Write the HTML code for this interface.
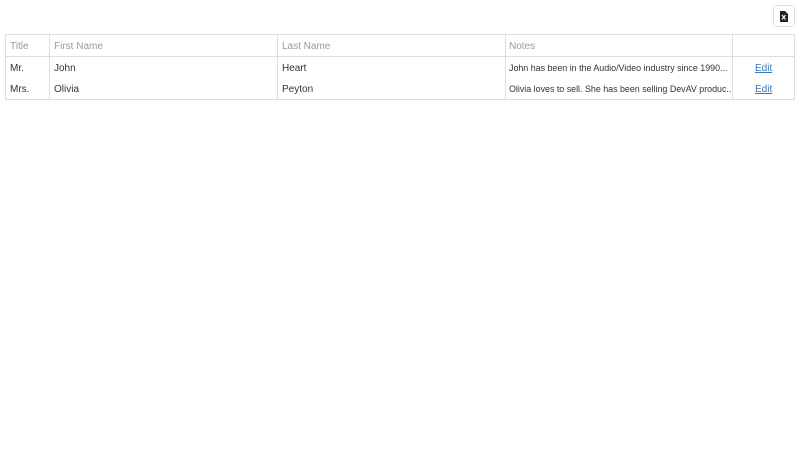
<!DOCTYPE html>
<html><head><style>
body{margin:0;width:800px;height:450px;background:#fff;font-family:"Liberation Sans",sans-serif;font-size:10px;color:#333;position:relative;overflow:hidden}
.btn{position:absolute;left:773px;top:5px;width:22px;height:22px;border:1px solid #ddd;border-radius:3px;box-sizing:border-box;background:#fff}
.grid{position:absolute;left:5px;top:34px;width:790px;height:66px;border:1px solid #ddd;box-sizing:border-box}
.v{position:absolute;top:0;bottom:0;width:1px;background:#ddd}
.hl{position:absolute;left:0;right:0;top:21px;height:1px;background:#ddd}
.t{position:absolute;white-space:nowrap}
.h{color:#999;top:5px}
.n{width:222px;overflow:hidden;font-size:8.9px}
a{color:#337ab7;text-decoration:underline}
</style></head><body>
<div class="btn"><svg width="20" height="20" viewBox="0 0 20 20"><path d="M6 5h5l3 3v8H6z" fill="#222"/><path d="M8 9l3.5 4.5M11.5 9L8 13.5" stroke="#fff" stroke-width="1.1"/></svg></div>
<div class="grid">
<div class="v" style="left:43px"></div><div class="v" style="left:271px"></div><div class="v" style="left:499px"></div><div class="v" style="left:726px"></div>
<div class="hl"></div>
<div class="t h" style="left:4px;top:6px">Title</div>
<div class="t h" style="left:48px;top:6px">First Name</div>
<div class="t h" style="left:276px;top:6px">Last Name</div>
<div class="t h" style="left:503px;top:6px">Notes</div>
<div class="t" style="left:4px;top:28px">Mr.</div>
<div class="t" style="left:48px;top:28px">John</div>
<div class="t" style="left:276px;top:28px">Heart</div>
<div class="t n" style="left:503px;top:28px">John has been in the Audio/Video industry since 1990...</div>
<div class="t" style="left:749px;top:28px"><a>Edit</a></div>
<div class="t" style="left:4px;top:49px">Mrs.</div>
<div class="t" style="left:48px;top:49px">Olivia</div>
<div class="t" style="left:276px;top:49px">Peyton</div>
<div class="t n" style="left:503px;top:49px">Olivia loves to sell. She has been selling DevAV produc...</div>
<div class="t" style="left:749px;top:49px"><a>Edit</a></div>
</div>
</body></html>
